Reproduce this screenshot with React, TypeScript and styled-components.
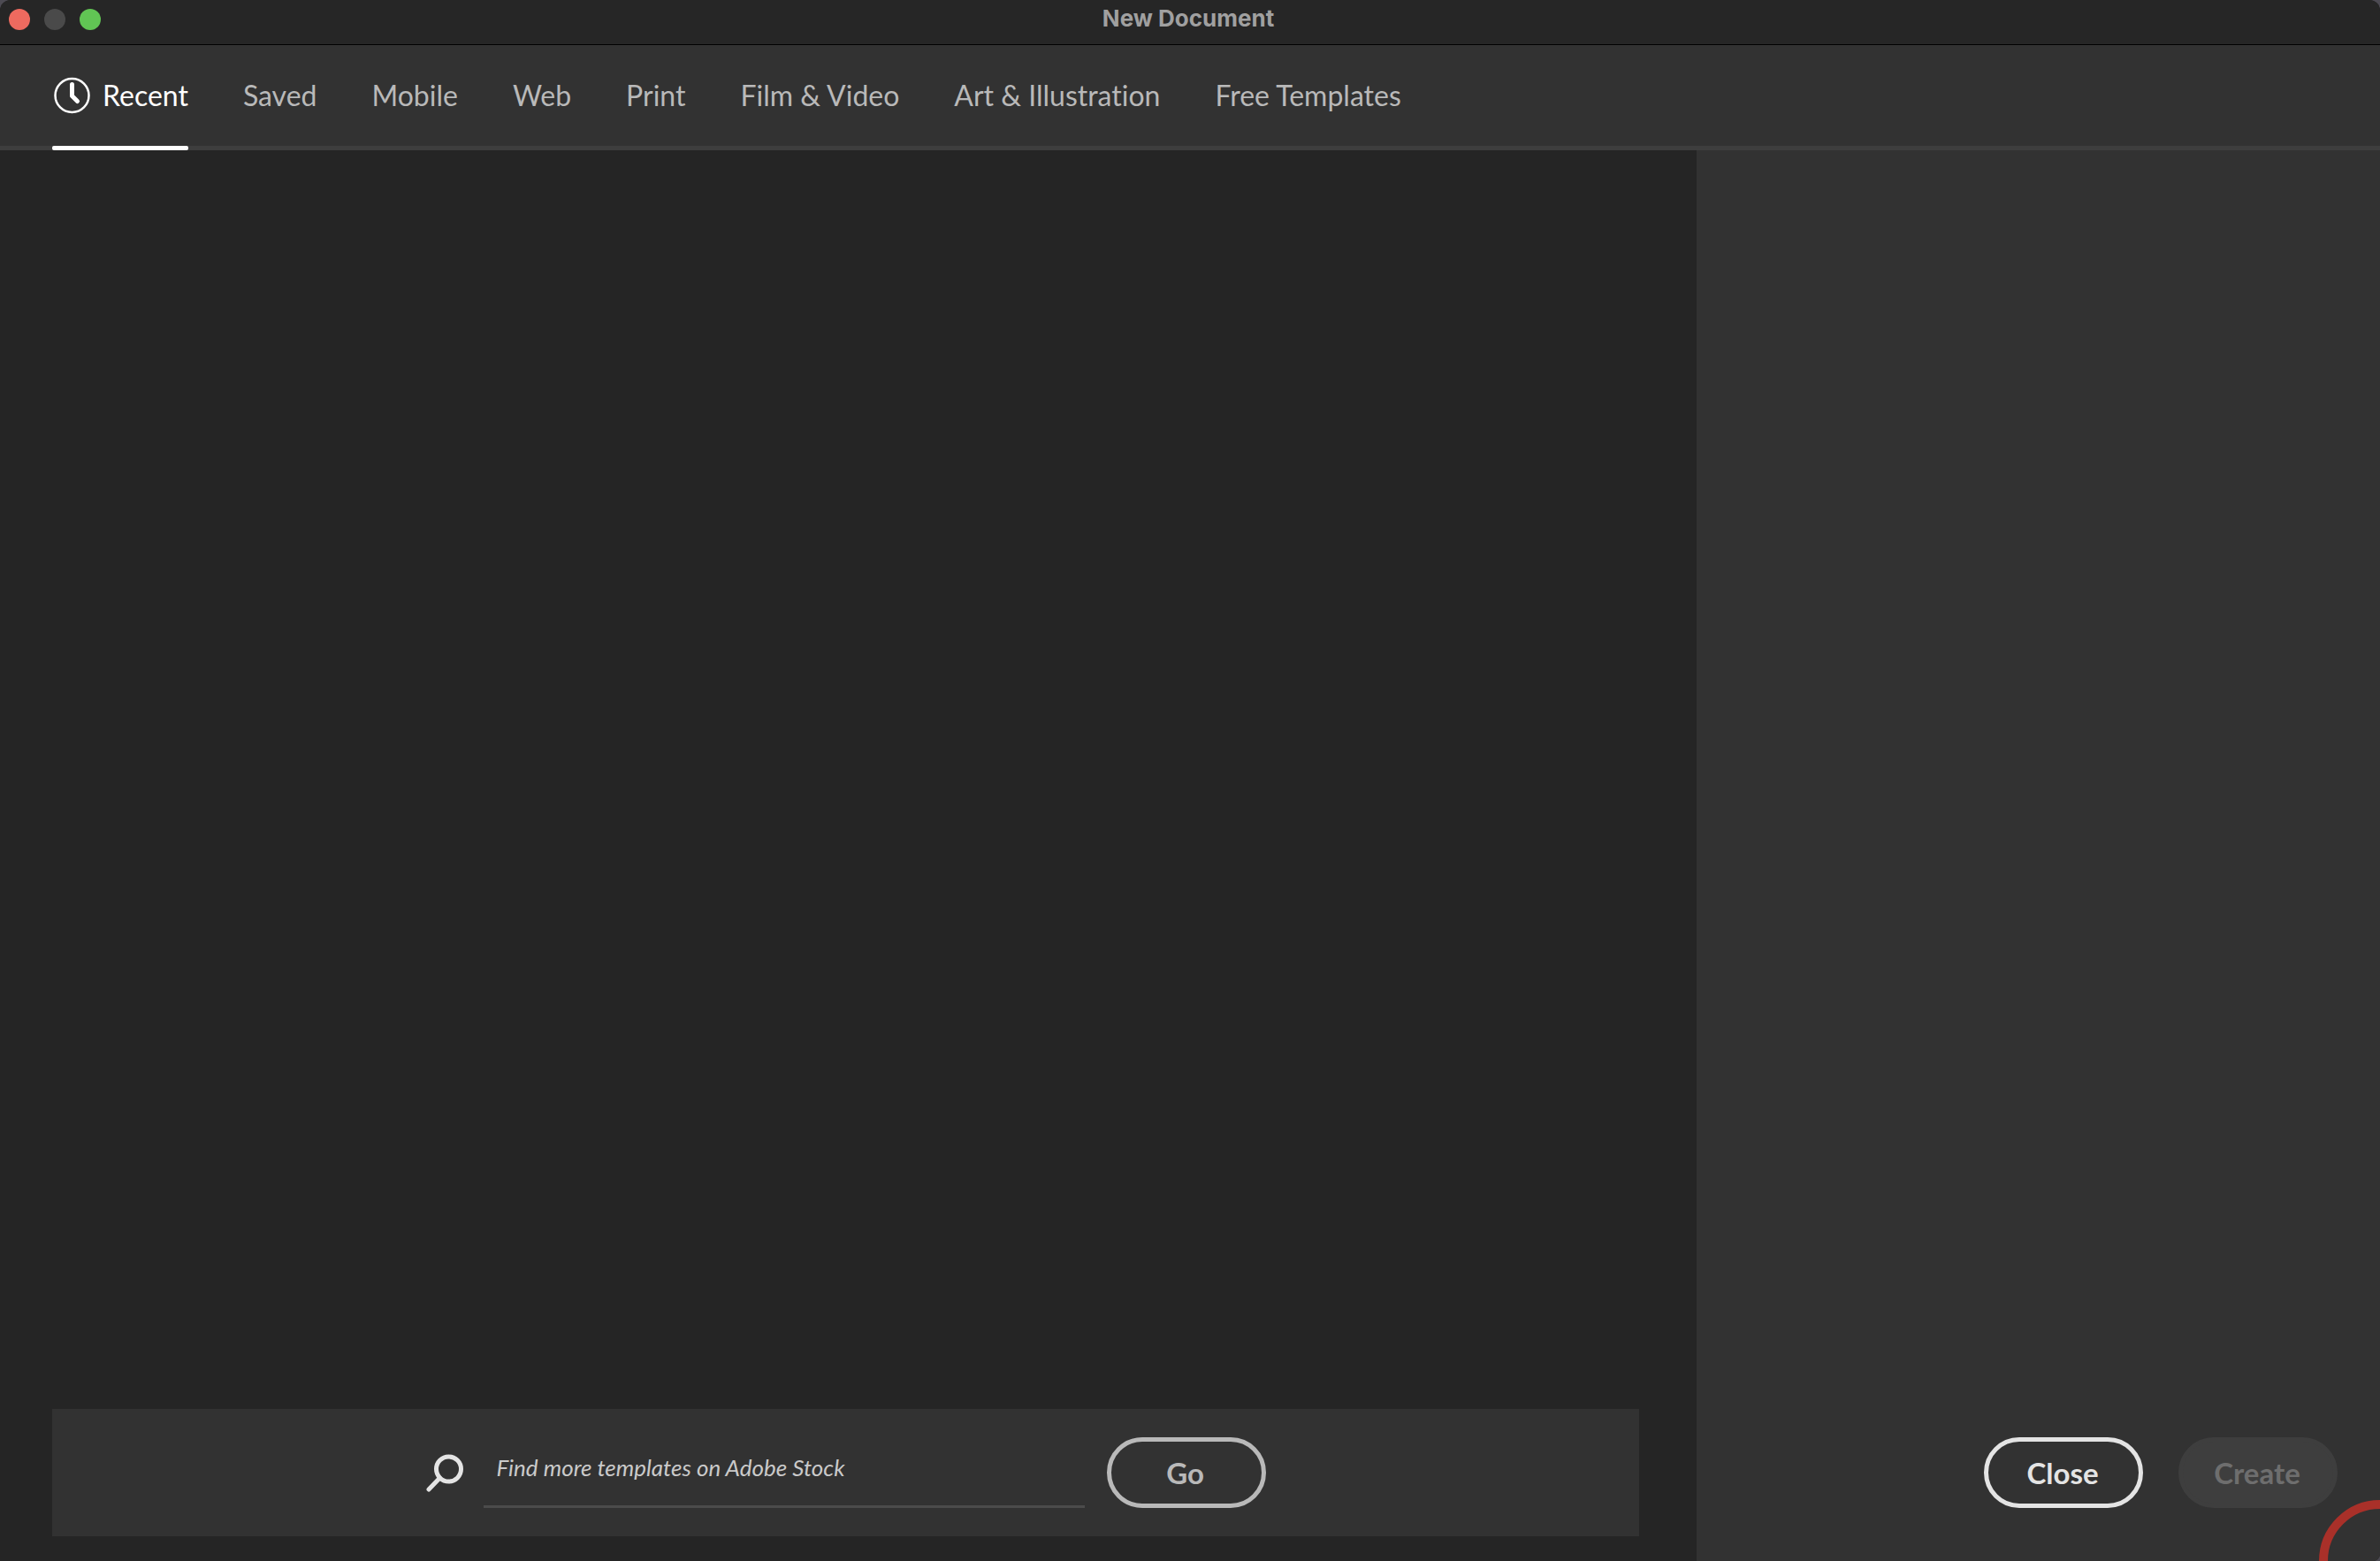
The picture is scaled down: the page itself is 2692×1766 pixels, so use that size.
import React, { useState } from "react";
import styled, { createGlobalStyle } from "styled-components";

const GlobalStyle = createGlobalStyle`
  * {
    box-sizing: border-box;
  }
  body {
    margin: 0;
    background: #4c4a52;
  }
  button,
  input {
    font: inherit;
  }
`;

const Window = styled.div`
  position: relative;
  display: flex;
  flex-direction: column;
  min-height: 100vh;
  overflow: hidden;
  border-radius: 12px 12px 8px 0;
  background: #252525;
  color: #b9b9b9;
  font-family: Lato, "Open Sans", sans-serif;
  font-variant-ligatures: none;
`;

const TitleBar = styled.header`
  display: grid;
  grid-template-columns: 1fr auto 1fr;
  height: 51px;
  padding: 10px 14px 0 10px;
  border-bottom: 1px solid #000;
  background: #262626;
`;

const TrafficLights = styled.div`
  display: flex;
  gap: 16px;
`;

const Light = styled.button<{ $color: string }>`
  width: 24px;
  height: 24px;
  padding: 0;
  border: 0;
  border-radius: 50%;
  background: ${({ $color }) => $color};
`;

const Title = styled.h1`
  margin: 0;
  color: #a0a0a0;
  font-family: Inter, "Liberation Sans", sans-serif;
  font-size: 26px;
  font-weight: 700;
  line-height: 22px;
`;

const TabBar = styled.nav`
  display: flex;
  gap: 62px;
  height: 119px;
  padding: 0 59px;
  background: #323232;
  box-shadow: inset 0 -5px #3e3e3e;
`;

const Tab = styled.button<{ $active: boolean }>`
  position: relative;
  display: flex;
  align-items: center;
  gap: 12px;
  padding: 0 0 5px;
  border: 0;
  background: none;
  color: ${({ $active }) => ($active ? "#fff" : "#b9b9b9")};
  font-size: 32px;
  line-height: 40px;
  white-space: nowrap;

  &::after {
    content: "";
    position: absolute;
    right: 0;
    bottom: 0;
    left: 0;
    height: 5px;
    border-radius: 2px;
    background: ${({ $active }) => ($active ? "#fff" : "none")};
  }
`;

const Body = styled.div`
  display: flex;
  flex: 1;
`;

const Main = styled.main`
  display: flex;
  flex: 1;
  flex-direction: column;
  justify-content: flex-end;
  padding: 0 65px 28px 59px;
`;

const SearchBar = styled.form`
  display: flex;
  align-items: center;
  justify-content: center;
  height: 144px;
  background: #323232;
`;

const SearchField = styled.input`
  width: 680px;
  height: 80px;
  margin: 0 25px 0 22px;
  padding: 0 15px 10px;
  border: 0;
  border-bottom: 3px solid #4b4b4b;
  outline: 0;
  background: none;
  color: #cacaca;
  font-size: 26px;
  font-style: italic;

  &::placeholder {
    color: #cacaca;
    opacity: 1;
  }
`;

const Sidebar = styled.aside`
  display: flex;
  align-items: flex-end;
  justify-content: flex-end;
  gap: 40px;
  width: 773px;
  padding: 0 48px 60px;
  background: #323232;
`;

const tones = {
  muted: { line: "#b9b9b9", fill: "transparent", text: "#b9b9b9" },
  bright: { line: "#e4e4e4", fill: "transparent", text: "#e4e4e4" },
  disabled: { line: "#3e3e3e", fill: "#3e3e3e", text: "#6e6e6e" },
};

const PillButton = styled.button<{ $tone: keyof typeof tones }>`
  width: 180px;
  height: 80px;
  padding: 0 2px 0 0;
  border: 5px solid ${({ $tone }) => tones[$tone].line};
  border-radius: 40px;
  background: ${({ $tone }) => tones[$tone].fill};
  color: ${({ $tone }) => tones[$tone].text};
  font-size: 33px;
  font-weight: 700;
`;

const ClickRing = styled.span`
  position: absolute;
  right: -69px;
  bottom: -69px;
  width: 138px;
  height: 138px;
  border: 10px solid #a93029;
  border-radius: 50%;
  pointer-events: none;
`;

const ClockIcon = () => (
  <svg width="45" height="42" viewBox="0 0 45 42" fill="none" aria-hidden="true">
    <circle cx="22.5" cy="21" r="19" stroke="#fff" strokeWidth="2.5" />
    <path
      d="M22.5 8.5V21.5L28.5 27.5"
      stroke="#fff"
      strokeWidth="5"
      strokeLinecap="round"
      strokeLinejoin="round"
    />
  </svg>
);

const SearchIcon = () => (
  <svg width="43" height="44" viewBox="0 0 43 44" fill="none" aria-hidden="true">
    <circle cx="25.5" cy="18" r="14" stroke="#e4e4e4" strokeWidth="5" />
    <path d="M15.5 28L3 41" stroke="#e4e4e4" strokeWidth="5" strokeLinecap="round" />
  </svg>
);

const tabs = [
  "Recent",
  "Saved",
  "Mobile",
  "Web",
  "Print",
  "Film & Video",
  "Art & Illustration",
  "Free Templates",
];

export default function App() {
  const [current, setCurrent] = useState("Recent");

  return (
    <>
      <GlobalStyle />
      <Window>
        <TitleBar>
          <TrafficLights>
            <Light $color="#ee6a5f" aria-label="Close window" />
            <Light $color="#4a4a4a" aria-label="Minimize window" disabled />
            <Light $color="#61c554" aria-label="Zoom window" />
          </TrafficLights>
          <Title>New Document</Title>
        </TitleBar>
        <TabBar>
          {tabs.map((name) => (
            <Tab key={name} $active={name === current} onClick={() => setCurrent(name)}>
              {name === "Recent" && <ClockIcon />}
              {name}
            </Tab>
          ))}
        </TabBar>
        <Body>
          <Main>
            <SearchBar onSubmit={(event) => event.preventDefault()}>
              <SearchIcon />
              <SearchField
                aria-label="Find more templates on Adobe Stock"
                placeholder="Find more templates on Adobe Stock"
              />
              <PillButton $tone="muted">Go</PillButton>
            </SearchBar>
          </Main>
          <Sidebar>
            <PillButton $tone="bright">Close</PillButton>
            <PillButton $tone="disabled" disabled>
              Create
            </PillButton>
          </Sidebar>
        </Body>
        <ClickRing />
      </Window>
    </>
  );
}
